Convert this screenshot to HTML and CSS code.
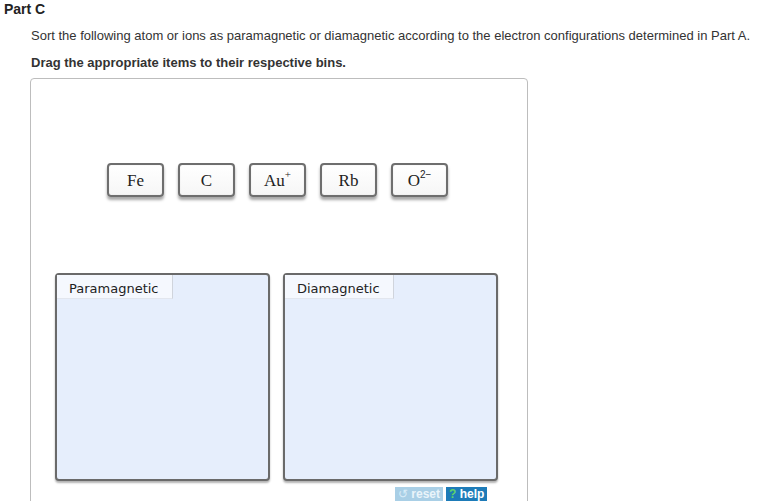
FILE: index.html
```html
<!DOCTYPE html>
<html>
<head>
<meta charset="utf-8">
<link rel="stylesheet" href="styles.css">
</head>
<body>
<h2 class="part-title">Part C</h2>
<div class="part-body">
  <p class="prompt">Sort the following atom or ions as paramagnetic or diamagnetic according to the electron configurations determined in Part A.</p>
  <p class="instr">Drag the appropriate items to their respective bins.</p>
</div>
<div class="workspace">
  <div class="tiles">
    <div class="tile">Fe</div>
    <div class="tile">C</div>
    <div class="tile">Au<sup>+</sup></div>
    <div class="tile">Rb</div>
    <div class="tile">O<sup class="sans">2&minus;</sup></div>
  </div>
  <div class="bins">
    <div class="bin"><div class="bin-label">Paramagnetic</div></div>
    <div class="bin"><div class="bin-label">Diamagnetic</div></div>
  </div>
  <div class="tools">
    <span class="btn reset"><span class="ico">&#8634;</span> reset</span>
    <span class="btn help"><span class="q">?</span> help</span>
  </div>
</div>
</body>
</html>
```
FILE: styles.css
```css
html, body {
  margin: 0;
  padding: 0;
  background: #fff;
  overflow: hidden;
}
body {
  font-family: "Liberation Sans", Arial, sans-serif;
  color: #333;
  width: 776px;
  height: 501px;
}
.part-title {
  margin: 0;
  padding: 2px 0 0 4px;
  font-size: 14px;
  line-height: 15px;
  font-weight: bold;
  color: #222;
}
.part-body {
  padding-left: 31px;
}
.prompt {
  margin: 11px 0 0 0;
  font-size: 13px;
  line-height: 15px;
  color: #333;
  white-space: nowrap;
}
.instr {
  margin: 12px 0 0 0;
  font-size: 13px;
  line-height: 15px;
  font-weight: bold;
  color: #333;
}
.workspace {
  margin: 8px 0 0 30px;
  width: 496px;
  height: 460px;
  border: 1px solid #bdbdbd;
  border-radius: 4px;
}
.tiles {
  display: flex;
  gap: 14px;
  padding: 84px 0 0 76px;
}
.tile {
  width: 53px;
  height: 30px;
  border: 2px solid #6e6e6e;
  border-radius: 4px;
  background: linear-gradient(#ffffff, #f6f6f6);
  box-shadow: 0 3px 3px rgba(0,0,0,0.35), inset 0 0 1px rgba(0,0,0,0.2);
  display: flex;
  align-items: center;
  justify-content: center;
  padding-top: 1px;
  box-sizing: content-box;
  height: 29px;
  font-family: "Liberation Serif", "Times New Roman", serif;
  font-size: 17px;
  color: #222;
}
.tile sup {
  font-size: 11px;
  line-height: 0;
  vertical-align: 0;
  position: relative;
  top: -7px;
}
.tile sup.sans {
  font-family: "Liberation Sans", Arial, sans-serif;
  font-size: 10px;
  top: -6px;
}
.bins {
  display: flex;
  gap: 13px;
  padding: 76px 0 0 24px;
}
.bin {
  width: 211px;
  height: 204px;
  border: 2px solid #6a6a6a;
  border-radius: 4px;
  background: #e6eefc;
  box-shadow: 0 2px 2px rgba(0,0,0,0.3);
}
.bin-label {
  display: inline-block;
  background: #f5f8fe;
  border-right: 1px solid #d0d4dc;
  border-bottom: 1px solid #e2e6ee;
  padding: 6px 13px 0 12px;
  height: 17px;
  font-family: "DejaVu Sans", Verdana, sans-serif;
  font-size: 13px;
  line-height: 16px;
  color: #222;
}
.tools {
  display: flex;
  gap: 3px;
  padding: 6px 0 0 364px;
  white-space: nowrap;
}
.btn {
  height: 15px;
  padding: 0 3px;
  font-family: "Liberation Sans", Arial, sans-serif;
  font-size: 12px;
  font-weight: bold;
  line-height: 15px;
  color: #fff;
  white-space: nowrap;
}
.reset {
  background: #a9cfe6;
  color: #eaf4fa;
}
.reset .ico {
  color: #d8ecf8;
  font-weight: normal;
}
.help {
  background: #1d7bb8;
}
.help .q {
  color: #5fd36a;
}
```
